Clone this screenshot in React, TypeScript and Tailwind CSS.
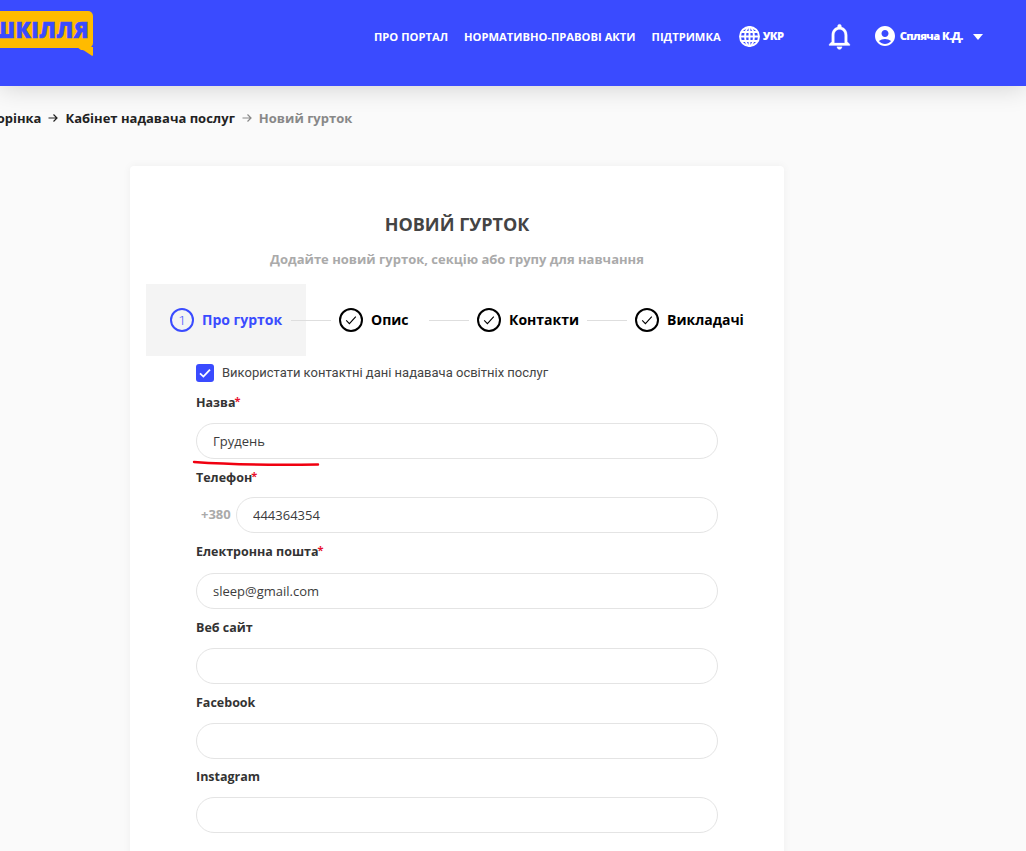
import React from "react";
import { MdAccountCircle } from "react-icons/md";

const Arrow = ({ c }: { c: string }) => (
  <svg width="10" height="10" viewBox="0 0 10 10" fill="none" stroke={c} strokeWidth="1.2" className="mx-[7px] shrink-0">
    <path d="M0.5 5H9M5.5 1.5L9 5L5.5 8.5" />
  </svg>
);

const StepDone = ({ label, w }: { label: string; w: string }) => (
  <div className={`flex items-center gap-2 shrink-0 ${w}`}>
    <svg width="24" height="24" viewBox="0 0 24 24" fill="none" className="shrink-0">
      <circle cx="12" cy="12" r="11" stroke="#000" strokeWidth="2" />
      <path d="M7.2 12.4L10.4 15.6L16.8 8.6" stroke="#000" strokeWidth="1.1" />
    </svg>
    <span className="-translate-y-px text-[14px] font-bold text-black whitespace-nowrap">{label}</span>
  </div>
);

const Line = ({ cls }: { cls: string }) => <div className={`h-px w-10 bg-[#dedede] shrink-0 relative ${cls}`} />;

const Label = ({ children, req, cls }: { children: React.ReactNode; req?: boolean; cls: string }) => (
  <div className={`text-[12.5px] leading-[18px] font-bold text-[#333] ${cls}`}>
    {children}
    {req && <span className="relative top-[-2px] ml-[-1px] text-[11px] text-[#e8112d]">*</span>}
  </div>
);

const Field = ({ value, cls }: { value?: string; cls?: string }) => (
  <input
    readOnly
    defaultValue={value}
    className={`block h-9 rounded-[18px] border border-[#e4e4e4] bg-white pl-4 pr-4 text-[13px] text-[#3c3c3c] outline-none w-full ${cls ?? ""}`}
  />
);

export default function App() {
  return (
    <div className="relative h-[851px] w-[1026px] overflow-hidden bg-[#fafafa] font-['Open_Sans',sans-serif]">
      <header className="relative z-10 flex h-[86px] items-start bg-[#3a4bff] shadow-[0_2px_24px_rgba(0,0,0,0.16)]">
        <div className="relative ml-[-27px] mt-[11px] h-[37px] w-[120px] shrink-0 rounded-[5px] bg-[#ffbb00]">
          <span className="absolute right-[4px] top-[1px] font-['Open_Sans',sans-serif] text-[22px] font-extrabold leading-[34px] tracking-[0.4px] text-[#3a4bff] whitespace-nowrap [-webkit-text-stroke:0.5px_#3a4bff]">
            ШКІЛЛЯ
          </span>
          <svg width="16" height="9" viewBox="0 0 16 9" className="absolute right-0 top-[36px]">
            <path d="M0 0H16V8C16 9 15 9 14.5 8.6L7 3.6C6 3 5 3 4 3Z" fill="#ffbb00" />
          </svg>
        </div>
        <nav className="ml-[281px] flex h-[74px] items-center text-[11.2px] font-bold text-white whitespace-nowrap">
          <span>ПРО ПОРТАЛ</span>
          <span className="ml-4">НОРМАТИВНО-ПРАВОВІ АКТИ</span>
          <span className="ml-4">ПІДТРИМКА</span>
          <svg width="21" height="21" viewBox="0 0 21 21" fill="none" stroke="#fff" strokeWidth="1.9" className="ml-[18px] -translate-y-px">
            <circle cx="10.5" cy="10.5" r="9.5" />
            <ellipse cx="10.5" cy="10.5" rx="4.4" ry="9.5" />
            <path d="M10.5 1V20M1 10.5H20M2.4 6H18.6M2.4 15H18.6" />
          </svg>
          <span className="ml-[3px] -translate-y-px font-extrabold tracking-[-0.5px]">УКР</span>
          <svg width="31" height="31" viewBox="0 0 24 24" fill="#fff" stroke="#fff" strokeWidth="0.2" className="ml-[40px] -translate-y-px">
            <path d="M12 22c1.1 0 2-.9 2-2h-4c0 1.1.89 2 2 2zm6-6v-5c0-3.07-1.64-5.64-4.5-6.32V4c0-.83-.67-1.5-1.5-1.5s-1.5.67-1.5 1.5v.68C7.63 5.36 6 7.92 6 11v5l-2 2v1h16v-1l-2-2zm-2 1H8v-6c0-2.48 1.51-4.5 4-4.5s4 2.02 4 4.5v6z" />
          </svg>
          <MdAccountCircle size={24} className="ml-[18px] -translate-y-px" />
          <span className="ml-[3px] -translate-y-px font-extrabold tracking-[-0.6px]">{"Спляч\u0430 К.Д."}</span>
          <span className="ml-[10px] h-0 w-0 border-x-[5.5px] border-t-[6px] border-x-transparent border-t-white" />
        </nav>
      </header>

      <div className="ml-[-77px] mt-[23px] flex h-[18px] items-center text-[13px] font-bold leading-[18px] text-[#222] whitespace-nowrap">
        <span>Головна сторінка</span>
        <Arrow c="#222" />
        <span>Кабінет надавача послуг</span>
        <Arrow c="#888" />
        <span className="text-[#888]">Новий гурток</span>
      </div>

      <main className="relative ml-[130px] mt-[39px] h-[720px] w-[654px] rounded-[4px] bg-white px-4 shadow-[0_0_8px_rgba(0,0,0,0.05)]">
        <h1 className="pt-[45px] text-center text-[18px] font-bold leading-[26px] text-[#444]">НОВИЙ ГУРТОК</h1>
        <p className="mt-[13px] text-center text-[13px] font-bold leading-[18px] text-[#aaa]">
          Додайте новий гурток, секцію або групу для навчання
        </p>

        <div className="mt-4 flex h-[72px] items-center">
          <div className="flex h-[72px] w-[160px] shrink-0 items-center gap-2 bg-[#f4f4f4] pl-6">
            <svg width="24" height="24" viewBox="0 0 24 24" fill="none" className="shrink-0">
              <circle cx="12" cy="12" r="11" stroke="#3a4bff" strokeWidth="2" />
              <text x="12" y="16.5" textAnchor="middle" fontSize="13" fill="#3a4bff" fontFamily="Roboto, sans-serif" fontWeight="300">1</text>
            </svg>
            <span className="-translate-y-px text-[14px] font-bold text-[#3a4bff] whitespace-nowrap">Про гурток</span>
          </div>
          <Line cls="ml-[-15px] mr-2" />
          <StepDone label="Опис" w="w-[90px]" />
          <Line cls="mr-2" />
          <StepDone label="Контакти" w="w-[110px]" />
          <Line cls="mr-2" />
          <StepDone label="Викладачі" w="w-[110px]" />
        </div>

        <form className="ml-[50px] w-[522px]">
          <div className="mt-2 flex h-[18px] items-center">
            <span className="flex h-[18px] w-[18px] items-center justify-center rounded-[3px] bg-[#3a4bff]">
              <svg width="14" height="14" viewBox="0 0 14 14" fill="none" stroke="#fff" strokeWidth="1.8">
                <path d="M2 7.4L5.4 10.6L12 3.6" />
              </svg>
            </span>
            <span className="ml-2 font-['Roboto',sans-serif] text-[13px] text-[#444]">
              Використати контактні дані надавача освітніх послуг
            </span>
          </div>

          <Label req cls="mt-[12px]">Назва</Label>
          <Field value="Грудень" cls="mt-[11px]" />
          <Label req cls="mt-[10px]">Телефон</Label>
          <div className="mt-[10px] flex items-center">
            <span className="ml-[5px] w-[35px] shrink-0 text-[13px] font-bold text-[#aaa]">+380</span>
            <Field value="444364354" />
          </div>
          <Label req cls="mt-[10px]">Електронна пошта</Label>
          <Field value="sleep@gmail.com" cls="mt-[12px]" />
          <Label cls="mt-[10px]">Веб сайт</Label>
          <Field cls="mt-[11px]" />
          <Label cls="mt-[10px]">Facebook</Label>
          <Field cls="mt-[11px]" />
          <Label cls="mt-[9px]">Instagram</Label>
          <Field cls="mt-[11px]" />
        </form>
      </main>

      <svg width="130" height="8" viewBox="0 0 130 8" fill="none" className="absolute left-[192px] top-[460px] z-20">
        <path d="M2 2C30 4 60 5.5 126 4.5" stroke="#f00010" strokeWidth="2.4" strokeLinecap="round" />
      </svg>
    </div>
  );
}
